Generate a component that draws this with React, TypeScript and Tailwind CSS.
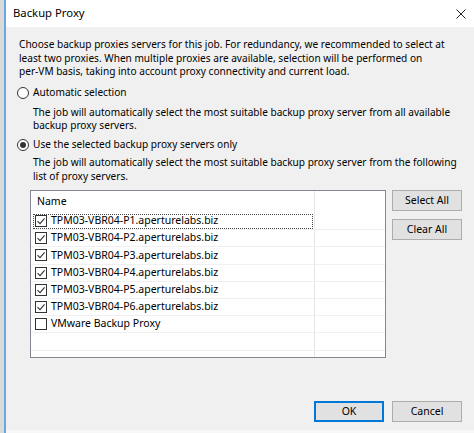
import React from "react";

const servers = [
  { name: "TPM03-VBR04-P1.aperturelabs.biz", checked: true, focus: true },
  { name: "TPM03-VBR04-P2.aperturelabs.biz", checked: true },
  { name: "TPM03-VBR04-P3.aperturelabs.biz", checked: true },
  { name: "TPM03-VBR04-P4.aperturelabs.biz", checked: true },
  { name: "TPM03-VBR04-P5.aperturelabs.biz", checked: true },
  { name: "TPM03-VBR04-P6.aperturelabs.biz", checked: true },
  { name: "VMware Backup Proxy", checked: false },
];

function Checkbox({ checked }: { checked: boolean }) {
  return (
    <div className="w-[12px] h-[12px] border border-[#333333] bg-white flex items-center justify-center shrink-0">
      {checked && (
        <svg width="10" height="10" viewBox="0 0 10 10">
          <path d="M1.5 5.2 L4 7.6 L8.6 2.4" fill="none" stroke="#333333" strokeWidth="1.1" />
        </svg>
      )}
    </div>
  );
}

function Radio({ selected }: { selected: boolean }) {
  return (
    <div className="w-[12px] h-[12px] rounded-full border border-[#333333] bg-white flex items-center justify-center shrink-0">
      {selected && <div className="w-[6px] h-[6px] rounded-full bg-[#333333]" />}
    </div>
  );
}

function Btn({ children, primary }: { children: React.ReactNode; primary?: boolean }) {
  return (
    <div
      className={
        primary
          ? "w-[70px] h-[21px] shrink-0 bg-[#e1e1e1] border-2 border-[#0078d7] flex items-center justify-center"
          : "w-[70px] h-[21px] shrink-0 bg-[#e1e1e1] border border-[#adadad] flex items-center justify-center"
      }
    >
      {children}
    </div>
  );
}

export default function App() {
  return (
    <div className="w-[474px] h-[433px] flex bg-[#f0f0f0] overflow-hidden font-['Noto_Sans',sans-serif] text-[10.1px] text-black">
      <div className="w-[4px] shrink-0 bg-[#dadada]" />
      <div className="w-[2px] shrink-0 bg-[#6aa6e0]" />
      <div className="flex-1 min-w-0 flex flex-col">
        <div className="h-[27px] shrink-0 bg-white flex items-center justify-between pl-[7px] pr-[8px]">
          <span className="text-[11.3px]">Backup Proxy</span>
          <svg width="10" height="10" viewBox="0 0 10 10">
            <path d="M0.5 0.5 L9.5 9.5 M9.5 0.5 L0.5 9.5" stroke="#222" strokeWidth="1" />
          </svg>
        </div>
        <div className="flex-1 min-w-0 flex flex-col pl-[11px] pr-[12px]">
          <p className="mt-[11px] pl-[2px] leading-[13.5px] whitespace-nowrap">
            Choose backup proxies servers for this job. For redundancy, we recommended to select at
            <br />
            least two proxies. When multiple proxies are available, selection will be performed on
            <br />
            per-VM basis, taking into account proxy connectivity and current load.
          </p>
          <div className="mt-[7.5px] h-[14px] flex items-center gap-[4px]">
            <Radio selected={false} />
            <span>Automatic selection</span>
          </div>
          <p className="mt-[6px] pl-[16px] leading-[13px] whitespace-nowrap">
            The job will automatically select the most suitable backup proxy server from all available
            <br />
            backup proxy servers.
          </p>
          <div className="mt-[6px] h-[14px] flex items-center gap-[4px]">
            <Radio selected={true} />
            <span>Use the selected backup proxy servers only</span>
          </div>
          <p className="mt-[4px] pl-[16px] leading-[13.5px] whitespace-nowrap">
            The job will automatically select the most suitable backup proxy server from the following
            <br />
            list of proxy servers.
          </p>
          <div className="mt-[7px] flex pl-[13px]">
            <div className="w-[356px] h-[168px] shrink-0 border border-[#828790] bg-white flex flex-col overflow-hidden text-[10.5px]">
              <div className="h-[22px] flex shrink-0">
                <div className="w-[284px] border-r border-[#e5e5e5] flex items-center pl-[6px]">Name</div>
                <div className="flex-1" />
              </div>
              {servers.map((s) => (
                <div key={s.name} className="h-[17.2px] flex shrink-0 border-b border-[#f0f0f0]">
                  <div className="w-[284px] border-r border-[#e5e5e5] flex items-center">
                    <div
                      className={
                        s.focus
                          ? "ml-[2px] w-[280px] h-[15px] border border-dotted border-[#444] flex items-center gap-[4px] pl-[1px]"
                          : "ml-[2px] w-[280px] h-[15px] border border-transparent flex items-center gap-[4px] pl-[1px]"
                      }
                    >
                      <Checkbox checked={s.checked} />
                      <span>{s.name}</span>
                    </div>
                  </div>
                  <div className="flex-1" />
                </div>
              ))}
              <div className="h-[17.2px] flex shrink-0 border-b border-[#f0f0f0]">
                <div className="w-[284px] border-r border-[#e5e5e5]" />
                <div className="flex-1" />
              </div>
              <div className="flex-1 flex">
                <div className="w-[284px] border-r border-[#e5e5e5]" />
                <div className="flex-1" />
              </div>
            </div>
            <div className="ml-[6px] flex flex-col gap-[8px] text-[10.5px]">
              <Btn>Select All</Btn>
              <Btn>Clear All</Btn>
            </div>
          </div>
          <div className="mt-[43px] flex justify-end gap-[8px] text-[10.5px]">
            <Btn primary>OK</Btn>
            <Btn>Cancel</Btn>
          </div>
        </div>
        <div className="h-[3px] shrink-0 bg-[#f7f7f7]" />
      </div>
    </div>
  );
}
